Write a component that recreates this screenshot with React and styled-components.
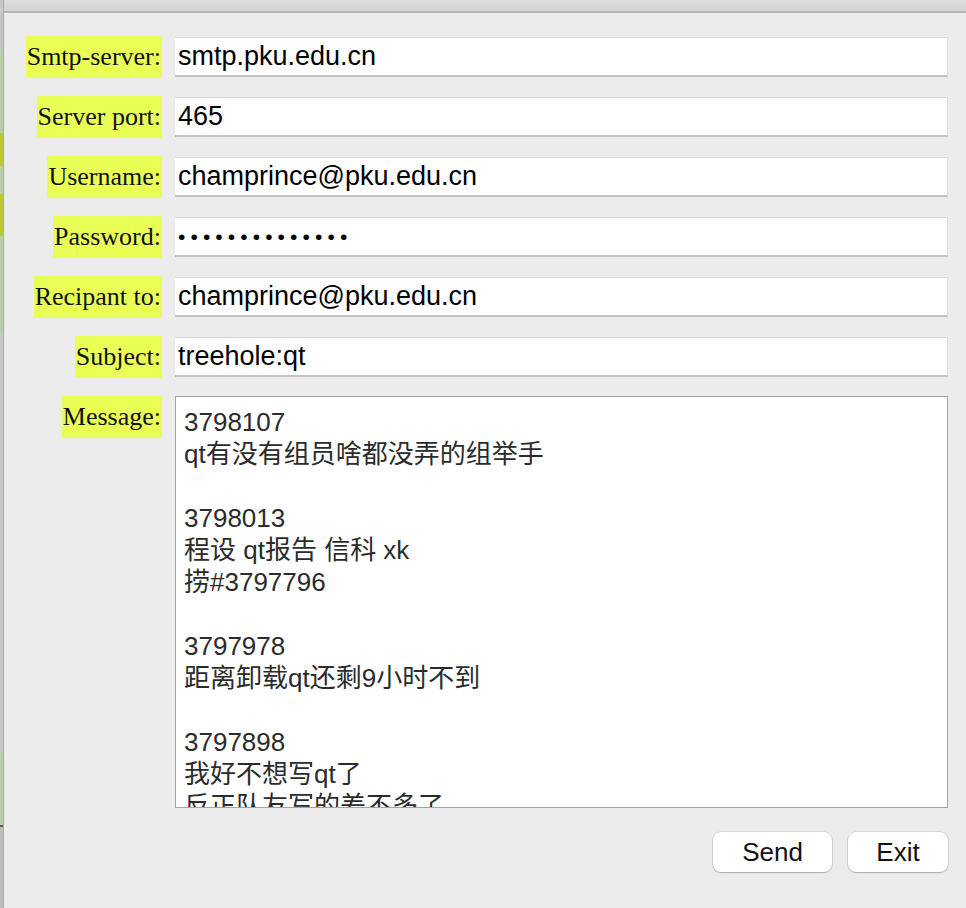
import { Fragment } from "react";
import styled, { createGlobalStyle } from "styled-components";

const Global = createGlobalStyle`
  html, body {
    margin: 0;
    padding: 0;
    background: #ececec;
  }
  * {
    box-sizing: border-box;
  }
`;

const Page = styled.div`
  display: flex;
  width: 966px;
  height: 908px;
  overflow: hidden;
`;

// sliver of the window that sits behind this one
const Backdrop = styled.div`
  width: 3px;
  flex: none;
  background: linear-gradient(
    to bottom,
    #c9c9c9 0px,
    #c9c9c9 13px,
    #c4c4c4 13px,
    #c4c4c4 52px,
    #b7cfa6 52px,
    #b7cfa6 133px,
    #bcc93a 133px,
    #bcc93a 166px,
    #b7cfa6 166px,
    #b7cfa6 194px,
    #bcc93a 194px,
    #bcc93a 236px,
    #b7cfa6 236px,
    #b7cfa6 333px,
    #c6c6c6 333px,
    #c6c6c6 753px,
    #b7cfa6 753px,
    #b7cfa6 825px,
    #5a5a5a 825px,
    #5a5a5a 827px,
    #bdbdbd 827px
  );
`;

const Window = styled.div`
  flex: 1;
  display: flex;
  flex-direction: column;
  background: #ececec;
  border-left: 1px solid #aaaaaa;
`;

const TitleBar = styled.div`
  height: 13px;
  flex: none;
  background: linear-gradient(to bottom, #dddddd, #d3d3d3);
  border-bottom: 2px solid #b4b4b4;
`;

const Body = styled.div`
  padding: 23px 18px 0 0;
  display: flex;
  flex-direction: column;
`;

const Form = styled.div`
  display: grid;
  grid-template-columns: 158px 1fr;
  column-gap: 13px;
  row-gap: 18px;
  align-items: center;
`;

const Label = styled.label`
  justify-self: end;
  align-self: ${(p) => (p.$top ? "start" : "center")};
  background: #eaff55;
  color: #111;
  font-family: "Liberation Serif", "Times New Roman", serif;
  font-size: 26px;
  line-height: 42px;
  height: 42px;
  padding: 0 1px;
  white-space: nowrap;
`;

const Field = styled.input`
  width: 100%;
  height: 40px;
  margin: 0;
  padding: 0 3px;
  background: #fff;
  border: none;
  border-top: 1px solid #dadada;
  border-right: 1px solid #e0e0e0;
  border-bottom: 2px solid #c3c3c3;
  font-family: "Liberation Sans", Arial, sans-serif;
  font-size: ${(p) => (p.$dots ? "21px" : "27px")};
  color: #000;
  letter-spacing: ${(p) => (p.$dots ? "5.1px" : "0")};
  outline: none;
`;

const Message = styled.textarea`
  width: 100%;
  height: 412px;
  margin: 0;
  padding: 9px 9px 9px 8px;
  background: #fff;
  border: 1px solid #a3a3a3;
  font-family: "Liberation Sans", "Noto Sans CJK SC", sans-serif;
  font-size: 26px;
  line-height: 32px;
  color: #2b2b2b;
  resize: none;
  overflow: hidden;
  outline: none;
`;

const Buttons = styled.div`
  display: flex;
  justify-content: flex-end;
  gap: 16px;
  margin-top: 24px;
`;

const Button = styled.button`
  width: ${(p) => p.$w}px;
  height: 40px;
  background: #fff;
  border: none;
  border-radius: 8px;
  box-shadow: 0 0 0 0.5px rgba(0, 0, 0, 0.16), 0 1px 1.5px rgba(0, 0, 0, 0.22);
  font-family: "Liberation Sans", Arial, sans-serif;
  font-size: 26px;
  color: #111;
  padding: 0;
`;

const fields = [
  { label: "Smtp-server:", value: "smtp.pku.edu.cn" },
  { label: "Server port:", value: "465" },
  { label: "Username:", value: "champrince@pku.edu.cn" },
  { label: "Password:", value: "••••••••••••••", dots: true },
  { label: "Recipant to:", value: "champrince@pku.edu.cn" },
  { label: "Subject:", value: "treehole:qt" },
];

const message = `3798107
qt有没有组员啥都没弄的组举手

3798013
程设 qt报告 信科 xk
捞#3797796

3797978
距离卸载qt还剩9小时不到

3797898
我好不想写qt了
反正队友写的差不多了
`;

const App = () => {
  return (
    <Page>
      <Global />
      <Backdrop />
      <Window>
        <TitleBar />
        <Body>
          <Form>
            {fields.map((f) => (
              <Fragment key={f.label}>
                <Label>{f.label}</Label>
                <Field readOnly defaultValue={f.value} $dots={f.dots} />
              </Fragment>
            ))}
            <Label $top>Message:</Label>
            <Message readOnly defaultValue={message} />
          </Form>
          <Buttons>
            <Button $w={119}>Send</Button>
            <Button $w={100}>Exit</Button>
          </Buttons>
        </Body>
      </Window>
    </Page>
  );
};

export default App;
